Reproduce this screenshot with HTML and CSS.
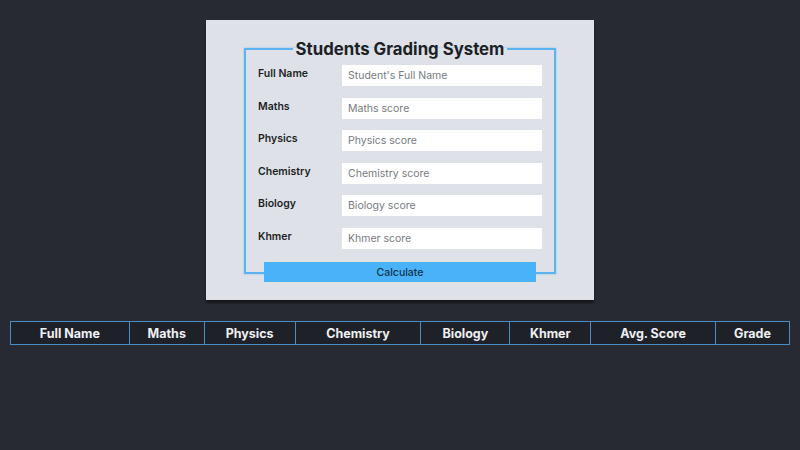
FILE: index.html
```html
<!DOCTYPE html>
<html>
<head lang="en">
    <meta charset="UTF-8">
    <title>Students Grading System</title>
    <link rel="stylesheet" href="styles.css">
</head>
<body>
    <div id="container">
        <form id="form">
            <fieldset>
                <legend>Students Grading System</legend>
                <div class="row">
                    <label for="name">Full Name</label>
                    <input type="text" id="name" placeholder="Student's Full Name">
                </div>
                <div class="row">
                    <label for="maths">Maths</label>
                    <input type="text" id="maths" placeholder="Maths score">
                </div>
                <div class="row">
                    <label for="physics">Physics</label>
                    <input type="text" id="physics" placeholder="Physics score">
                </div>
                <div class="row">
                    <label for="chemistry">Chemistry</label>
                    <input type="text" id="chemistry" placeholder="Chemistry score">
                </div>
                <div class="row">
                    <label for="biology">Biology</label>
                    <input type="text" id="biology" placeholder="Biology score">
                </div>
                <div class="row">
                    <label for="khmer">Khmer</label>
                    <input type="text" id="khmer" placeholder="Khmer score">
                </div>
                <button type="button" id="calc">Calculate</button>
            </fieldset>
        </form>
    </div>
    <table id="result">
        <thead>
            <tr>
                <th>Full Name</th>
                <th>Maths</th>
                <th>Physics</th>
                <th>Chemistry</th>
                <th>Biology</th>
                <th>Khmer</th>
                <th>Avg. Score</th>
                <th>Grade</th>
            </tr>
        </thead>
        <tbody></tbody>
    </table>
</body>
</html>
```
FILE: styles.css
```css
*{
    margin: 0;
    padding: 0;
    box-sizing: border-box;
}
body{
    background: #272a33;
    font-family: Inter, "Open Sans", sans-serif;
    padding-top: 20px;
}
#container{
    width: 388px;
    height: 280px;
    margin: 0 auto;
    background: #dee2e8;
    padding: 19px 38px 0 38px;
    box-shadow: 0 3px 2px rgba(0,0,0,0.45);
}
fieldset{
    border: 2px solid #5cb3f2;
    box-shadow: 0 0 2px rgba(92,179,242,0.6);
    height: 235px;
    padding: 6px 12px 0 12px;
}
legend{
    margin: 0 auto;
    padding: 0 3px;
    font-size: 16.8px;
    font-weight: 700;
    color: #1d1f24;
}
.row{
    display: flex;
    align-items: flex-start;
    height: 32.5px;
}
.row label{
    width: 84px;
    font-size: 10.5px;
    font-weight: 600;
    color: #1d1f24;
    padding-top: 2px;
}
.row input{
    width: 200px;
    height: 21px;
    border: none;
    background: #fff;
    padding: 0 6px;
    font-family: inherit;
    font-size: 10.5px;
    outline: none;
}
.row input::placeholder{
    color: #777b82;
}
#calc{
    display: block;
    width: 272px;
    height: 20px;
    margin: 2px auto 0 auto;
    border: none;
    background: #4ab2f8;
    color: #10324f;
    font-family: inherit;
    font-size: 10.5px;
    font-weight: 500;
    cursor: pointer;
}
#result{
    width: 780px;
    margin: 21px auto 0 auto;
    border-collapse: collapse;
    background: #1f2129;
    border: 1px solid #4a8cc4;
}
#result th{
    border: 1px solid #4a8cc4;
    color: #eef0f3;
    font-size: 12.5px;
    font-weight: 700;
    height: 23px;
    padding: 0;
}
#result th:nth-child(1){ width: 119px; }
#result th:nth-child(2){ width: 75px; }
#result th:nth-child(3){ width: 91px; }
#result th:nth-child(4){ width: 126px; }
#result th:nth-child(5){ width: 89px; }
#result th:nth-child(6){ width: 81px; }
#result th:nth-child(7){ width: 125px; }
#result th:nth-child(8){ width: 74px; }
```
